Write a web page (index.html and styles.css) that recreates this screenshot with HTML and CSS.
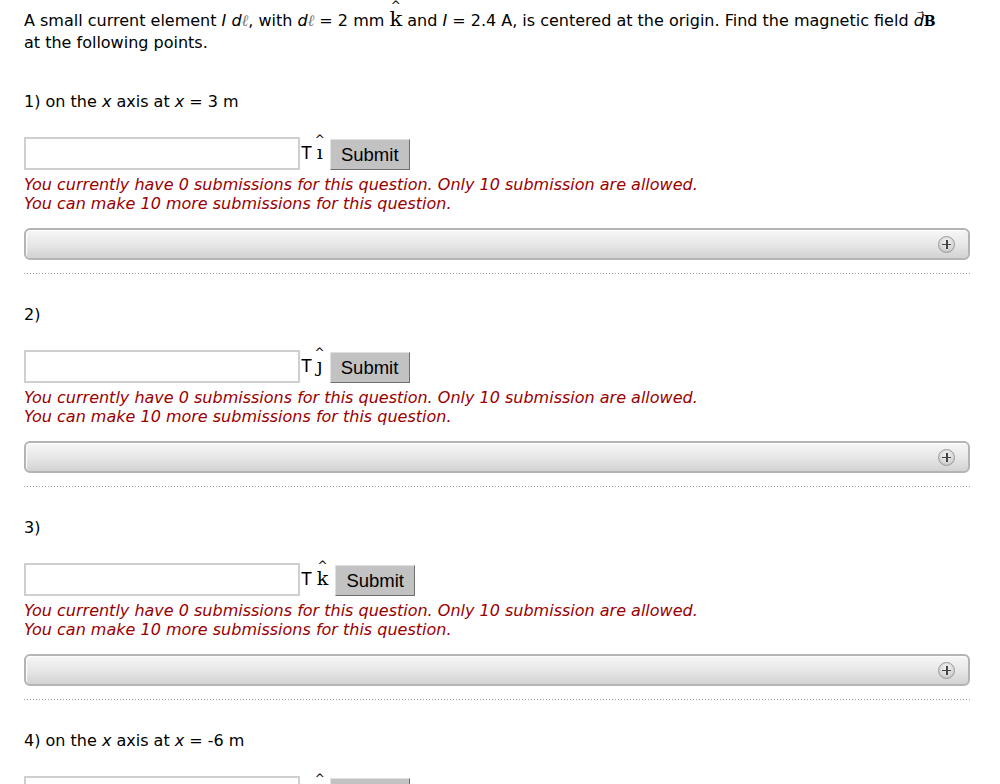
FILE: index.html
```html
<!DOCTYPE html>
<html>
<head>
<meta charset="utf-8">
<link rel="stylesheet" href="styles.css">
</head>
<body>
<div class="page">
  <p class="intro">A small current element <i>I</i> <i>d</i><span class="ell">ℓ</span>, with <i>d</i><span class="ell">ℓ</span> = 2 mm <span class="hatted big">k<span class="hat">^</span></span> and <i>I</i> = 2.4 A, is centered at the origin. Find the magnetic field <i>d</i><span class="vec">B<span class="arrow">⃗</span></span><br>at the following points.</p>

  <div class="part">
    <div class="label">1) on the <i>x</i> axis at <i>x</i> = 3 m</div>
    <div class="answer-row">
      <input class="answer" type="text">
      <span class="unit">T <span class="hatted">ı<span class="hat">^</span></span></span>
      <button class="submit">Submit</button>
    </div>
    <div class="notice">You currently have 0 submissions for this question. Only 10 submission are allowed.<br>You can make 10 more submissions for this question.</div>
    <div class="bar"><span class="plus"></span></div>
    <div class="rule"></div>
  </div>

  <div class="part">
    <div class="label">2)</div>
    <div class="answer-row">
      <input class="answer" type="text">
      <span class="unit">T <span class="hatted">ȷ<span class="hat">^</span></span></span>
      <button class="submit">Submit</button>
    </div>
    <div class="notice">You currently have 0 submissions for this question. Only 10 submission are allowed.<br>You can make 10 more submissions for this question.</div>
    <div class="bar"><span class="plus"></span></div>
    <div class="rule"></div>
  </div>

  <div class="part">
    <div class="label">3)</div>
    <div class="answer-row">
      <input class="answer" type="text">
      <span class="unit">T <span class="hatted">k<span class="hat">^</span></span></span>
      <button class="submit">Submit</button>
    </div>
    <div class="notice">You currently have 0 submissions for this question. Only 10 submission are allowed.<br>You can make 10 more submissions for this question.</div>
    <div class="bar"><span class="plus"></span></div>
    <div class="rule"></div>
  </div>

  <div class="part">
    <div class="label">4) on the <i>x</i> axis at <i>x</i> = -6 m</div>
    <div class="answer-row">
      <input class="answer" type="text">
      <span class="unit">T <span class="hatted">ı<span class="hat">^</span></span></span>
      <button class="submit">Submit</button>
    </div>
  </div>
</div>
</body>
</html>
```

FILE: styles.css
```css
html, body {
  margin: 0;
  padding: 0;
  background: #fff;
}
body {
  font-family: "DejaVu Sans", Verdana, sans-serif;
  font-size: 16px;
  color: #000;
  overflow: hidden;
}
.page {
  padding: 9px 30px 0 24px;
  width: 946px;
}
.intro {
  margin: 0;
  line-height: 21px;
}
.ell {
  font-family: "DejaVu Serif", serif;
  font-style: italic;
  color: #777;
}
.hatted {
  position: relative;
  display: inline-block;
  font-family: "DejaVu Serif", "Liberation Serif", serif;
  font-size: 19px;
  line-height: 1;
}
.hatted.big {
  font-size: 21px;
}
.hat {
  position: absolute;
  left: 50%;
  top: -9px;
  transform: translateX(-50%);
  font-size: 12px;
  font-family: "DejaVu Sans", sans-serif;
}
.vec {
  position: relative;
  display: inline-block;
  font-family: "DejaVu Serif", serif;
  font-weight: bold;
  font-size: 14px;
}
.arrow {
  position: absolute;
  left: 0;
  top: -4px;
  font-weight: normal;
}
.part {
  margin-top: 39px;
}
.part + .part {
  margin-top: 31px;
}
.label {
  line-height: 20px;
  height: 20px;
}
.answer-row {
  margin-top: 25px;
  display: flex;
  align-items: flex-end;
  height: 33px;
}
.answer {
  box-sizing: border-box;
  width: 276px;
  height: 33px;
  margin: 0;
  border: 2px solid #cfcfcf;
  background: #fff;
  padding: 0 4px;
}
.unit {
  font-family: "Liberation Sans", Arial, sans-serif;
  font-size: 18px;
  margin-left: 1px;
  line-height: 22px;
  padding-bottom: 6px;
}
.submit {
  margin-left: 7px;
  box-sizing: border-box;
  width: 80px;
  height: 31px;
  font-family: "Liberation Sans", Arial, sans-serif;
  font-size: 18.5px;
  color: #000;
  background: #c2c2c2;
  border: 1px solid;
  border-color: #e0e0e0 #6e6e6e #6e6e6e #e0e0e0;
  padding: 0;
}
.notice {
  margin-top: 5px;
  color: #990000;
  font-style: italic;
  line-height: 19px;
}
.bar {
  margin-top: 15px;
  box-sizing: border-box;
  height: 32px;
  border: 2px solid #b4b4b4;
  border-radius: 6px;
  background: linear-gradient(to bottom, #f6f6f6 0%, #e8e8e8 50%, #d2d2d2 100%);
  box-shadow: inset 1px 1px 1px #fff;
  display: flex;
  align-items: center;
  justify-content: flex-end;
  padding-right: 13px;
}
.plus {
  position: relative;
  box-sizing: border-box;
  width: 17px;
  height: 17px;
  border-radius: 50%;
  border: 1px solid #9a9a9a;
  background: radial-gradient(circle at 50% 35%, #f4f4f4 0%, #d6d6d6 60%, #b8b8b8 100%);
}
.plus::before,
.plus::after {
  content: "";
  position: absolute;
  background: #444;
}
.plus::before {
  left: 3px;
  right: 3px;
  top: 7px;
  height: 1.5px;
}
.plus::after {
  top: 3px;
  bottom: 3px;
  left: 7px;
  width: 1.5px;
}
.rule {
  margin-top: 13px;
  height: 1px;
  background-image: linear-gradient(to right, #a0a0a0 1px, transparent 1px);
  background-size: 3px 1px;
}
```
